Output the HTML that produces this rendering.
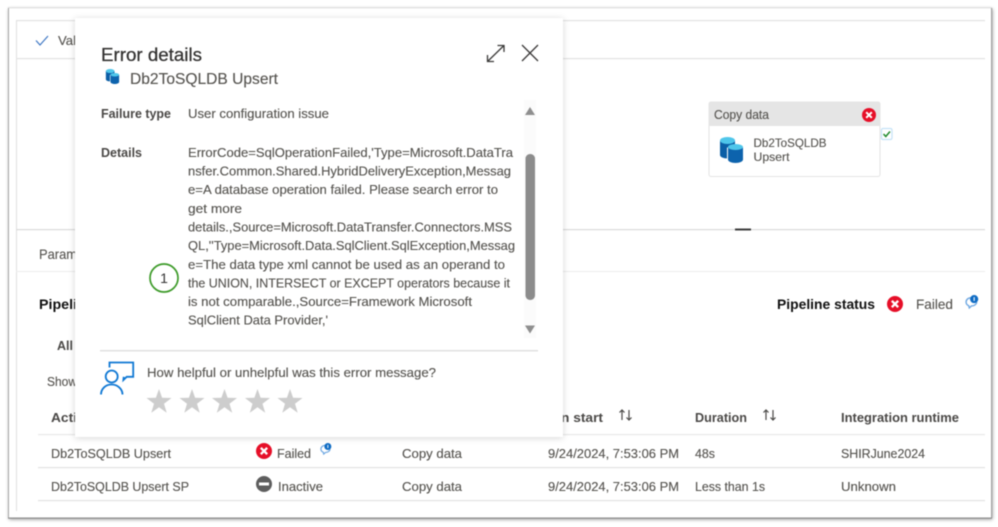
<!DOCTYPE html>
<html><head><meta charset="utf-8"><title>Error details</title>
<style>
html,body{margin:0;padding:0;background:#fff;width:998px;height:527px;overflow:hidden}
svg{display:block;filter:blur(0.5px)}
text{font-family:"Liberation Sans",sans-serif;font-size:12.5px;fill:#55534f;stroke:#55534f;stroke-width:.12px}
.b{font-weight:bold;fill:#4a4846;stroke:none}
.k{font-weight:bold;fill:#111;stroke:none;font-size:14px}
</style></head><body>
<svg width="998" height="527" viewBox="0 0 998 527" xmlns="http://www.w3.org/2000/svg">
<defs>
<filter id="fs" x="-10%" y="-10%" width="120%" height="120%"><feDropShadow dx="0" dy="1" stdDeviation="3.5" flood-color="#000" flood-opacity="0.16"/></filter>
<filter id="fo" x="-3%" y="-3%" width="106%" height="106%"><feDropShadow dx="1" dy="1.5" stdDeviation="1.800" flood-color="#000" flood-opacity="0.4"/></filter>
<symbol id="cyl" viewBox="0 0 23 26">
<path d="M0 3.500V18c0 2 3.400 3.500 7.500 3.500S15 20 15 18V3.500z" fill="#0b5ea6"/>
<ellipse cx="7.500" cy="3.500" rx="7.500" ry="3.500" fill="#4fc6ea"/>
<path d="M7 10.500V23c0 1.800 3.600 3 8 3s8-1.200 8-3V10.500z" fill="#fff"/>
<path d="M8 10.500V22.500c0 1.900 3.400 3.500 7.500 3.500S23 24.400 23 22.500V10.500z" fill="#0d63ad"/>
<ellipse cx="15.500" cy="10" rx="7.500" ry="3" fill="#4fc6ea"/>
</symbol>
<symbol id="err" viewBox="0 0 16 16">
<circle cx="8" cy="8" r="8" fill="#e60f28"/>
<path d="M4.800 4.800l6.400 6.400M11.200 4.800l-6.400 6.400" stroke="#fff" stroke-width="2.300" fill="none"/>
</symbol>
<symbol id="cmt" viewBox="0 0 13 13">
<path d="M6 2.500C3 2.500 1 4.300 1 6.500c0 1.600 1 2.900 2.500 3.500L4 12l2-1.800c2.500 0 4.500-1.500 5-3.500" fill="none" stroke="#6fa8e2" stroke-width="1.300"/>
<circle cx="8.500" cy="3.800" r="3.800" fill="#0f6cc4"/>
<rect x="8" y="2" width="1" height="3.500" fill="#fff"/>
</symbol>
<symbol id="sort" viewBox="0 0 15 14">
<path d="M4 12V2M1.500 4.500L4 2l2.500 2.500M11 2v10M8.500 9.500L11 12l2.500-2.500" fill="none" stroke="#4a4846" stroke-width="1.200"/>
</symbol>
</defs>

<rect x="8" y="7.500" width="983.500" height="510.500" fill="#fff" filter="url(#fo)"/>
<rect x="8" y="7" width="984" height="1.500" fill="#e4e4e4"/>
<rect x="8" y="8" width="1" height="510" fill="#a8a8a8"/>
<rect x="991" y="8" width="1.200" height="510" fill="#a0a0a0"/>
<rect x="8" y="517.500" width="984" height="1.200" fill="#8c8c8c"/>

<rect x="16" y="21" width="1" height="490" fill="#e0e0e0"/>
<rect x="16" y="20" width="969" height="1.200" fill="#e2e2e2"/>
<rect x="16" y="58" width="969" height="1.200" fill="#e2e2e2"/>
<rect x="16" y="229" width="969" height="1.200" fill="#dadada"/>
<rect x="735" y="228.500" width="16" height="2" fill="#3c3c3c"/>
<rect x="16" y="271" width="969" height="1" fill="#ececec"/>

<path d="M36 40.500l4 4.500 8-9" fill="none" stroke="#3f78c4" stroke-width="1.200"/>
<text x="58" y="45" textLength="18" lengthAdjust="spacingAndGlyphs">Val</text>
<text x="39" y="259" style="font-size:14px" textLength="38" lengthAdjust="spacingAndGlyphs">Param</text>
<text x="39" y="309" class="k" textLength="38" lengthAdjust="spacingAndGlyphs">Pipeli</text>
<text x="57" y="350" class="b" textLength="16" lengthAdjust="spacingAndGlyphs">All</text>
<text x="47" y="386" textLength="30" lengthAdjust="spacingAndGlyphs">Show</text>
<text x="51" y="422" class="b" textLength="26" lengthAdjust="spacingAndGlyphs">Acti</text>

<rect x="38" y="434" width="947" height="1.200" fill="#e8e8e8"/>
<rect x="38" y="467" width="947" height="1.200" fill="#e2e2e2"/>
<rect x="38" y="500" width="947" height="1.200" fill="#e2e2e2"/>

<text x="561" y="422" class="b" textLength="42" lengthAdjust="spacingAndGlyphs">n start</text>
<use href="#sort" x="618" y="408" width="15" height="14"/>
<text x="695" y="422" class="b" textLength="52" lengthAdjust="spacingAndGlyphs">Duration</text>
<use href="#sort" x="762" y="408" width="15" height="14"/>
<text x="841" y="422" class="b" textLength="118" lengthAdjust="spacingAndGlyphs">Integration runtime</text>

<text x="51" y="458" textLength="120" lengthAdjust="spacingAndGlyphs">Db2ToSQLDB Upsert</text>
<use href="#err" x="256" y="443" width="16" height="16"/>
<text x="277" y="458" textLength="34" lengthAdjust="spacingAndGlyphs">Failed</text>
<use href="#cmt" x="320" y="443" width="12" height="12"/>
<text x="402" y="458" textLength="60" lengthAdjust="spacingAndGlyphs">Copy data</text>
<text x="548" y="458" textLength="131" lengthAdjust="spacingAndGlyphs">9/24/2024, 7:53:06 PM</text>
<text x="695" y="458" textLength="20" lengthAdjust="spacingAndGlyphs">48s</text>
<text x="841" y="458" textLength="84" lengthAdjust="spacingAndGlyphs">SHIRJune2024</text>

<text x="51" y="491" textLength="138" lengthAdjust="spacingAndGlyphs">Db2ToSQLDB Upsert SP</text>
<circle cx="264" cy="484" r="8" fill="#5e5e5e"/><rect x="259" y="482.500" width="10" height="3" fill="#fff"/>
<text x="278" y="491" textLength="45" lengthAdjust="spacingAndGlyphs">Inactive</text>
<text x="402" y="491" textLength="60" lengthAdjust="spacingAndGlyphs">Copy data</text>
<text x="548" y="491" textLength="131" lengthAdjust="spacingAndGlyphs">9/24/2024, 7:53:06 PM</text>
<text x="695" y="491" textLength="70" lengthAdjust="spacingAndGlyphs">Less than 1s</text>
<text x="841" y="491" textLength="55" lengthAdjust="spacingAndGlyphs">Unknown</text>

<text x="777" y="309" class="k" textLength="98" lengthAdjust="spacingAndGlyphs">Pipeline status</text>
<use href="#err" x="887" y="296" width="16" height="16"/>
<text x="916" y="309" style="font-size:14px" textLength="37" lengthAdjust="spacingAndGlyphs">Failed</text>
<use href="#cmt" x="965" y="295" width="14" height="14"/>

<rect x="709" y="102" width="171" height="74.500" rx="2" fill="#fff" stroke="#e4e4e4" stroke-width="1"/>
<path d="M709 126V104a2 2 0 0 1 2-2h167a2 2 0 0 1 2 2v22z" fill="#e5e5e5"/>
<text x="714" y="119" textLength="55" lengthAdjust="spacingAndGlyphs">Copy data</text>
<use href="#err" x="862" y="108" width="14" height="14"/>
<use href="#cyl" x="720" y="137" width="23" height="26"/>
<text x="753.500" y="147" style="font-size:12px" textLength="73" lengthAdjust="spacingAndGlyphs">Db2ToSQLDB</text>
<text x="753.500" y="161" style="font-size:12px" textLength="36" lengthAdjust="spacingAndGlyphs">Upsert</text>
<rect x="881.500" y="128.500" width="10.500" height="11" rx="1.500" fill="#fff" stroke="#c5e2f7" stroke-width="1.200"/>
<path d="M883.500 134l2.300 2.500 4.200-5" fill="none" stroke="#1f8a2c" stroke-width="1.500"/>

<rect x="75" y="18" width="488" height="419" fill="#fff" filter="url(#fs)"/>

<text x="101" y="61" style="font-size:18px;fill:#323130;stroke:#323130;stroke-width:.25px" textLength="101" lengthAdjust="spacingAndGlyphs">Error details</text>
<use href="#cyl" x="105" y="69" width="15" height="15"/>
<text x="130" y="84" style="font-size:16px" textLength="148" lengthAdjust="spacingAndGlyphs">Db2ToSQLDB Upsert</text>
<path d="M487.500 61.500L504 45.500M487.500 55v6.500h6.500M497.500 45.500h6.500V52" fill="none" stroke="#3b3a39" stroke-width="1.300"/>
<path d="M522 45l16 16M538 45l-16 16" fill="none" stroke="#3b3a39" stroke-width="1.300"/>

<text x="101" y="118" class="b" textLength="70" lengthAdjust="spacingAndGlyphs">Failure type</text>
<text x="188" y="118" textLength="141" lengthAdjust="spacingAndGlyphs">User configuration issue</text>
<text x="101" y="157" class="b" textLength="41" lengthAdjust="spacingAndGlyphs">Details</text>

<text x="188" y="157" textLength="325" lengthAdjust="spacingAndGlyphs">ErrorCode=SqlOperationFailed,'Type=Microsoft.DataTra</text>
<text x="188" y="175.500" textLength="323" lengthAdjust="spacingAndGlyphs">nsfer.Common.Shared.HybridDeliveryException,Messag</text>
<text x="188" y="194" textLength="310" lengthAdjust="spacingAndGlyphs">e=A database operation failed. Please search error to</text>
<text x="188" y="213" textLength="54" lengthAdjust="spacingAndGlyphs">get more</text>
<text x="188" y="231.500" textLength="324" lengthAdjust="spacingAndGlyphs">details.,Source=Microsoft.DataTransfer.Connectors.MSS</text>
<text x="188" y="250" textLength="327" lengthAdjust="spacingAndGlyphs">QL,''Type=Microsoft.Data.SqlClient.SqlException,Messag</text>
<text x="188" y="269" textLength="317" lengthAdjust="spacingAndGlyphs">e=The data type xml cannot be used as an operand to</text>
<text x="188" y="287.500" textLength="322" lengthAdjust="spacingAndGlyphs">the UNION, INTERSECT or EXCEPT operators because it</text>
<text x="188" y="306" textLength="284" lengthAdjust="spacingAndGlyphs">is not comparable.,Source=Framework Microsoft</text>
<text x="188" y="324.500" textLength="140" lengthAdjust="spacingAndGlyphs">SqlClient Data Provider,'</text>

<rect x="524" y="100" width="12" height="238" fill="#fbfbfb"/>
<path d="M525 115l5-8 5 8z" fill="#8f8f8f"/>
<rect x="525.500" y="154" width="9.500" height="146" rx="4.500" fill="#8c8c8c"/>
<path d="M525 325.500h10l-5 8z" fill="#8f8f8f"/>

<circle cx="164" cy="278" r="14" fill="#fff" stroke="#3c9a28" stroke-width="1.700"/>
<text x="164" y="283" text-anchor="middle" style="font-size:14px;fill:#333;stroke:none">1</text>

<rect x="100" y="350" width="438" height="1.500" fill="#e0e0e0"/>

<path d="M109.500 367.500v-5h23.700v14.300h-6.500l-3.300 3.200.3-3.200" fill="none" stroke="#0f78d4" stroke-width="1.800"/>
<circle cx="111.700" cy="376.500" r="6" fill="#fff" stroke="#0f78d4" stroke-width="1.800"/>
<path d="M101 394.500c0-5.500 4.500-10 10.500-10s11 4.500 11 10" fill="none" stroke="#0f78d4" stroke-width="1.800"/>

<text x="147" y="377" textLength="289" lengthAdjust="spacingAndGlyphs">How helpful or unhelpful was this error message?</text>
<g fill="#cdcdcd">
<path d="M159 389l3.100 8.800 9.400.2-7.500 5.700 2.700 9-7.700-5.400-7.700 5.400 2.700-9-7.500-5.700 9.400-.2z"/>
<path d="M192 389l3.100 8.800 9.400.2-7.500 5.700 2.700 9-7.700-5.400-7.700 5.400 2.700-9-7.500-5.700 9.400-.2z"/>
<path d="M224.500 389l3.100 8.800 9.400.2-7.500 5.700 2.700 9-7.700-5.400-7.700 5.400 2.700-9-7.500-5.700 9.400-.2z"/>
<path d="M257.500 389l3.100 8.800 9.400.2-7.500 5.700 2.700 9-7.700-5.400-7.700 5.400 2.700-9-7.500-5.700 9.400-.2z"/>
<path d="M290 389l3.100 8.800 9.400.2-7.500 5.700 2.700 9-7.700-5.400-7.700 5.400 2.700-9-7.500-5.700 9.400-.2z"/>
</g>
</svg>
</body></html>
